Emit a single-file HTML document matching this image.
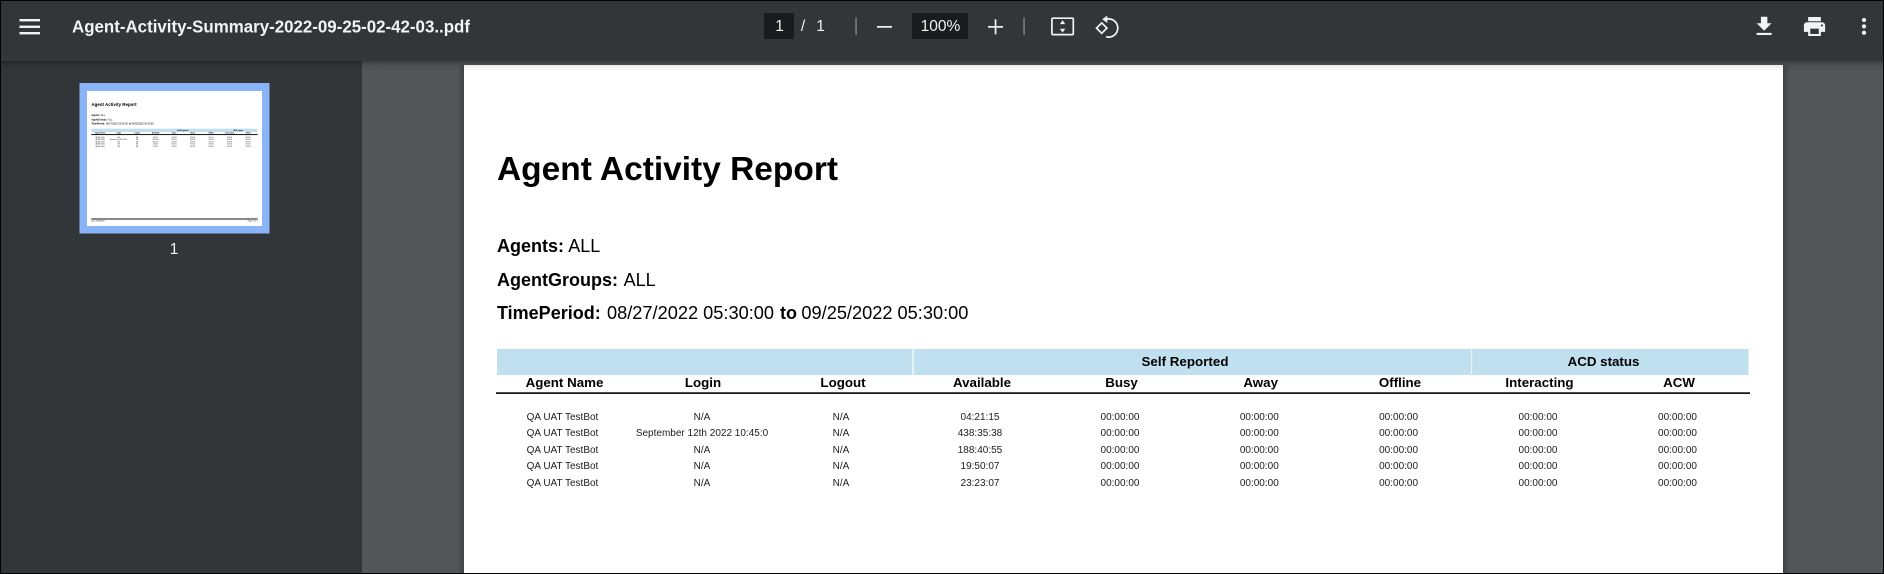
<!DOCTYPE html>
<html lang="en">
<head>
<meta charset="utf-8">
<title>Agent-Activity-Summary-2022-09-25-02-42-03..pdf</title>
<style>
html,body{margin:0;padding:0;width:1884px;height:574px;overflow:hidden;background:#525659}
svg{display:block}
text{font-family:"Liberation Sans",Arial,sans-serif}
.h{font-size:13.33px;font-weight:700;text-anchor:middle;fill:#000}
.r{font-size:10px;text-anchor:middle;fill:#1c1c1c}
.m{font-size:18px;fill:#000}
.b{font-weight:700}
.t{fill:#f1f3f4;font-size:15.5px}
.c{text-anchor:middle}
</style>
</head>
<body>
<svg width="1884" height="574" viewBox="0 0 1884 574" xmlns="http://www.w3.org/2000/svg">
<defs>
<linearGradient id="top" x1="0" y1="0" x2="0" y2="1">
<stop offset="0" stop-color="#000" stop-opacity=".3"/>
<stop offset=".4" stop-color="#000" stop-opacity=".08"/>
<stop offset="1" stop-color="#000" stop-opacity="0"/>
</linearGradient>
<linearGradient id="sl" x1="0" y1="0" x2="1" y2="0">
<stop offset="0" stop-color="#000" stop-opacity="0"/>
<stop offset="1" stop-color="#000" stop-opacity=".22"/>
</linearGradient>
<linearGradient id="sr" x1="0" y1="0" x2="1" y2="0">
<stop offset="0" stop-color="#000" stop-opacity=".22"/>
<stop offset="1" stop-color="#000" stop-opacity="0"/>
</linearGradient>
<clipPath id="thumbclip"><rect x="87" y="91" width="175" height="135"/></clipPath>
</defs>

<!-- backgrounds -->
<rect width="1884" height="574" fill="#525659"/>
<rect x="0" y="0" width="362" height="574" fill="#323639"/>
<rect x="457" y="65" width="7" height="509" fill="url(#sl)"/>
<rect x="1783" y="65" width="7" height="509" fill="url(#sr)"/>
<rect x="464" y="65" width="1319" height="509" fill="#fff"/>

<!-- page -->
<text x="497" y="180" font-size="33.3" font-weight="700" textLength="341" lengthAdjust="spacingAndGlyphs" fill="#000">Agent Activity Report</text>
<text x="497" y="252" class="m b">Agents:</text><text x="568.2" y="252" class="m">ALL</text>
<text x="497" y="286" class="m b">AgentGroups:</text><text x="623.6" y="286" class="m">ALL</text>
<text x="497" y="319" class="m b">TimePeriod:</text><text x="607" y="319" class="m" textLength="167" lengthAdjust="spacingAndGlyphs">08/27/2022 05:30:00</text><text x="780" y="319" class="m b">to</text><text x="801.4" y="319" class="m" textLength="167" lengthAdjust="spacingAndGlyphs">09/25/2022 05:30:00</text>

<rect x="497" y="349" width="1251.5" height="26" fill="#c0dfef"/>
<rect x="912.5" y="349" width="1.2" height="26" fill="#fff"/>
<rect x="1471" y="349" width="1.2" height="26" fill="#e6f2f8"/>
<text x="1185" y="366" class="h" textLength="87">Self Reported</text>
<text x="1603.5" y="366" class="h">ACD status</text>
<text x="564.5" y="387" class="h">Agent Name</text>
<text x="703" y="387" class="h">Login</text>
<text x="843" y="387" class="h">Logout</text>
<text x="982" y="387" class="h">Available</text>
<text x="1121.5" y="387" class="h">Busy</text>
<text x="1260.7" y="387" class="h">Away</text>
<text x="1400" y="387" class="h">Offline</text>
<text x="1539.5" y="387" class="h">Interacting</text>
<text x="1679" y="387" class="h">ACW</text>
<rect x="496" y="392.3" width="1254" height="1.6" fill="#000"/>

<g class="rows">
<text x="562.5" y="420" class="r">QA UAT TestBot</text><text x="702" y="420" class="r">N/A</text><text x="841" y="420" class="r">N/A</text><text x="980" y="420" class="r">04:21:15</text><text x="1120" y="420" class="r">00:00:00</text><text x="1259.3" y="420" class="r">00:00:00</text><text x="1398.6" y="420" class="r">00:00:00</text><text x="1538" y="420" class="r">00:00:00</text><text x="1677.5" y="420" class="r">00:00:00</text>
<text x="562.5" y="436" class="r">QA UAT TestBot</text><text x="702" y="436" class="r">September 12th 2022 10:45:0</text><text x="841" y="436" class="r">N/A</text><text x="980" y="436" class="r">438:35:38</text><text x="1120" y="436" class="r">00:00:00</text><text x="1259.3" y="436" class="r">00:00:00</text><text x="1398.6" y="436" class="r">00:00:00</text><text x="1538" y="436" class="r">00:00:00</text><text x="1677.5" y="436" class="r">00:00:00</text>
<text x="562.5" y="453" class="r">QA UAT TestBot</text><text x="702" y="453" class="r">N/A</text><text x="841" y="453" class="r">N/A</text><text x="980" y="453" class="r">188:40:55</text><text x="1120" y="453" class="r">00:00:00</text><text x="1259.3" y="453" class="r">00:00:00</text><text x="1398.6" y="453" class="r">00:00:00</text><text x="1538" y="453" class="r">00:00:00</text><text x="1677.5" y="453" class="r">00:00:00</text>
<text x="562.5" y="469" class="r">QA UAT TestBot</text><text x="702" y="469" class="r">N/A</text><text x="841" y="469" class="r">N/A</text><text x="980" y="469" class="r">19:50:07</text><text x="1120" y="469" class="r">00:00:00</text><text x="1259.3" y="469" class="r">00:00:00</text><text x="1398.6" y="469" class="r">00:00:00</text><text x="1538" y="469" class="r">00:00:00</text><text x="1677.5" y="469" class="r">00:00:00</text>
<text x="562.5" y="486" class="r">QA UAT TestBot</text><text x="702" y="486" class="r">N/A</text><text x="841" y="486" class="r">N/A</text><text x="980" y="486" class="r">23:23:07</text><text x="1120" y="486" class="r">00:00:00</text><text x="1259.3" y="486" class="r">00:00:00</text><text x="1398.6" y="486" class="r">00:00:00</text><text x="1538" y="486" class="r">00:00:00</text><text x="1677.5" y="486" class="r">00:00:00</text>
</g>

<!-- thumbnail -->
<rect x="79.5" y="83" width="190" height="150.5" fill="#8ab4f8"/>
<rect x="87" y="91" width="175" height="135" fill="#fff"/>
<g clip-path="url(#thumbclip)">
<g transform="translate(87 91) scale(.1327) translate(-464 -65)">
<text x="497" y="180" font-size="33.3" font-weight="700" textLength="341" lengthAdjust="spacingAndGlyphs" fill="#000">Agent Activity Report</text>
<text x="497" y="252" class="m b">Agents:</text><text x="568.2" y="252" class="m">ALL</text>
<text x="497" y="286" class="m b">AgentGroups:</text><text x="623.6" y="286" class="m">ALL</text>
<text x="497" y="319" class="m b">TimePeriod:</text><text x="607" y="319" class="m">08/27/2022 05:30:00</text><text x="780" y="319" class="m b">to</text><text x="801.4" y="319" class="m">09/25/2022 05:30:00</text>
<rect x="497" y="349" width="1251" height="26" fill="#c0dfef"/>
<text x="1185" y="366" class="h">Self Reported</text>
<text x="1603.5" y="366" class="h">ACD status</text>
<text x="564.5" y="387" class="h">Agent Name</text><text x="703" y="387" class="h">Login</text><text x="843" y="387" class="h">Logout</text><text x="982" y="387" class="h">Available</text><text x="1121.5" y="387" class="h">Busy</text><text x="1260.7" y="387" class="h">Away</text><text x="1400" y="387" class="h">Offline</text><text x="1539.5" y="387" class="h">Interacting</text><text x="1679" y="387" class="h">ACW</text>
<rect x="496" y="390" width="1254" height="7" fill="#000"/>
<text x="562.5" y="420" class="r">QA UAT TestBot</text><text x="702" y="420" class="r">N/A</text><text x="841" y="420" class="r">N/A</text><text x="980" y="420" class="r">04:21:15</text><text x="1120" y="420" class="r">00:00:00</text><text x="1259.3" y="420" class="r">00:00:00</text><text x="1398.6" y="420" class="r">00:00:00</text><text x="1538" y="420" class="r">00:00:00</text><text x="1677.5" y="420" class="r">00:00:00</text>
<text x="562.5" y="436" class="r">QA UAT TestBot</text><text x="702" y="436" class="r">September 12th 2022 10:45:0</text><text x="841" y="436" class="r">N/A</text><text x="980" y="436" class="r">438:35:38</text><text x="1120" y="436" class="r">00:00:00</text><text x="1259.3" y="436" class="r">00:00:00</text><text x="1398.6" y="436" class="r">00:00:00</text><text x="1538" y="436" class="r">00:00:00</text><text x="1677.5" y="436" class="r">00:00:00</text>
<text x="562.5" y="453" class="r">QA UAT TestBot</text><text x="702" y="453" class="r">N/A</text><text x="841" y="453" class="r">N/A</text><text x="980" y="453" class="r">188:40:55</text><text x="1120" y="453" class="r">00:00:00</text><text x="1259.3" y="453" class="r">00:00:00</text><text x="1398.6" y="453" class="r">00:00:00</text><text x="1538" y="453" class="r">00:00:00</text><text x="1677.5" y="453" class="r">00:00:00</text>
<text x="562.5" y="469" class="r">QA UAT TestBot</text><text x="702" y="469" class="r">N/A</text><text x="841" y="469" class="r">N/A</text><text x="980" y="469" class="r">19:50:07</text><text x="1120" y="469" class="r">00:00:00</text><text x="1259.3" y="469" class="r">00:00:00</text><text x="1398.6" y="469" class="r">00:00:00</text><text x="1538" y="469" class="r">00:00:00</text><text x="1677.5" y="469" class="r">00:00:00</text>
<text x="562.5" y="486" class="r">QA UAT TestBot</text><text x="702" y="486" class="r">N/A</text><text x="841" y="486" class="r">N/A</text><text x="980" y="486" class="r">23:23:07</text><text x="1120" y="486" class="r">00:00:00</text><text x="1259.3" y="486" class="r">00:00:00</text><text x="1398.6" y="486" class="r">00:00:00</text><text x="1538" y="486" class="r">00:00:00</text><text x="1677.5" y="486" class="r">00:00:00</text>
<rect x="496" y="1026" width="1254" height="7" fill="#000"/>
<text x="497" y="1050" font-size="14" fill="#000">Date: 9/25/2022</text>
<text x="1750" y="1050" font-size="14" fill="#000" text-anchor="end">Page: 1 of 1</text>
</g>
</g>
<text x="174" y="254" class="t c">1</text>

<!-- toolbar -->
<rect x="0" y="0" width="1884" height="61" fill="#323639"/>
<rect x="0" y="61" width="1884" height="10" fill="url(#top)"/>

<!-- menu -->
<rect x="19.5" y="19" width="20.5" height="2.4" fill="#f1f3f4"/>
<rect x="19.5" y="25.6" width="20.5" height="2.4" fill="#f1f3f4"/>
<rect x="19.5" y="32" width="20.5" height="2.4" fill="#f1f3f4"/>

<text x="72" y="32.5" font-size="17.5" font-weight="700" fill="#f1f3f4" textLength="398" lengthAdjust="spacingAndGlyphs">Agent-Activity-Summary-2022-09-25-02-42-03..pdf</text>

<!-- page selector -->
<rect x="764" y="13" width="30" height="26" fill="#191b1c"/>
<text x="779.5" y="31" class="t c">1</text>
<text x="803" y="31" class="t c">/</text>
<text x="820.5" y="31" class="t c">1</text>
<rect x="855.4" y="17.5" width="1.3" height="17.5" fill="#8a8c8e"/>

<!-- zoom -->
<rect x="877" y="26" width="15" height="1.7" fill="#f1f3f4"/>
<rect x="912" y="13" width="56" height="26" fill="#191b1c"/>
<text x="940.5" y="31" class="t c">100%</text>
<rect x="988" y="26" width="15" height="1.7" fill="#f1f3f4"/>
<rect x="994.7" y="19.3" width="1.7" height="15" fill="#f1f3f4"/>
<rect x="1023.4" y="17.5" width="1.3" height="17.5" fill="#8a8c8e"/>

<!-- fit to page -->
<rect x="1051.9" y="18.2" width="21.4" height="16.4" rx="1" fill="none" stroke="#f1f3f4" stroke-width="1.7"/>
<path d="M1062.6 20.2l2.7 3.9h-5.4zM1062.6 32.6l2.7-3.9h-5.4z" fill="#f1f3f4"/>

<!-- rotate -->
<path d="M1101.7 22.9l5.2 5.2-5.2 5.2-5.2-5.2z" fill="none" stroke="#f1f3f4" stroke-width="1.7"/>
<path d="M1106 19.3A9.1 9.1 0 1 1 1106 36.7" fill="none" stroke="#f1f3f4" stroke-width="1.7"/>
<path d="M1107.3 15.6v7.4l-5.1-3.7z" fill="#f1f3f4"/>

<!-- download -->
<g transform="translate(1751.3 13.6) scale(1.07)" fill="#f1f3f4"><path d="M19 9h-4V3H9v6H5l7 7 7-7zM5 18v2h14v-2H5z"/></g>
<!-- print -->
<g transform="translate(1801.8 13.8) scale(1.06)" fill="#f1f3f4"><path d="M19 8H5c-1.66 0-3 1.34-3 3v6h4v4h12v-4h4v-6c0-1.66-1.34-3-3-3zm-3 11H8v-5h8v5zm3-7c-.55 0-1-.45-1-1s.45-1 1-1 1 .45 1 1-.45 1-1 1zm-1-9H6v4h12V3z"/></g>
<!-- more -->
<g transform="translate(1851.3 13.7) scale(1.06)" fill="#f1f3f4"><path d="M12 8c1.1 0 2-.9 2-2s-.9-2-2-2-2 .9-2 2 .9 2 2 2zm0 2c-1.1 0-2 .9-2 2s.9 2 2 2 2-.9 2-2-.9-2-2-2zm0 6c-1.1 0-2 .9-2 2s.9 2 2 2 2-.9 2-2-.9-2-2-2z"/></g>

<!-- outer border -->
<rect x=".5" y=".5" width="1883" height="573" fill="none" stroke="#000" stroke-width="1"/>
</svg>
</body>
</html>
